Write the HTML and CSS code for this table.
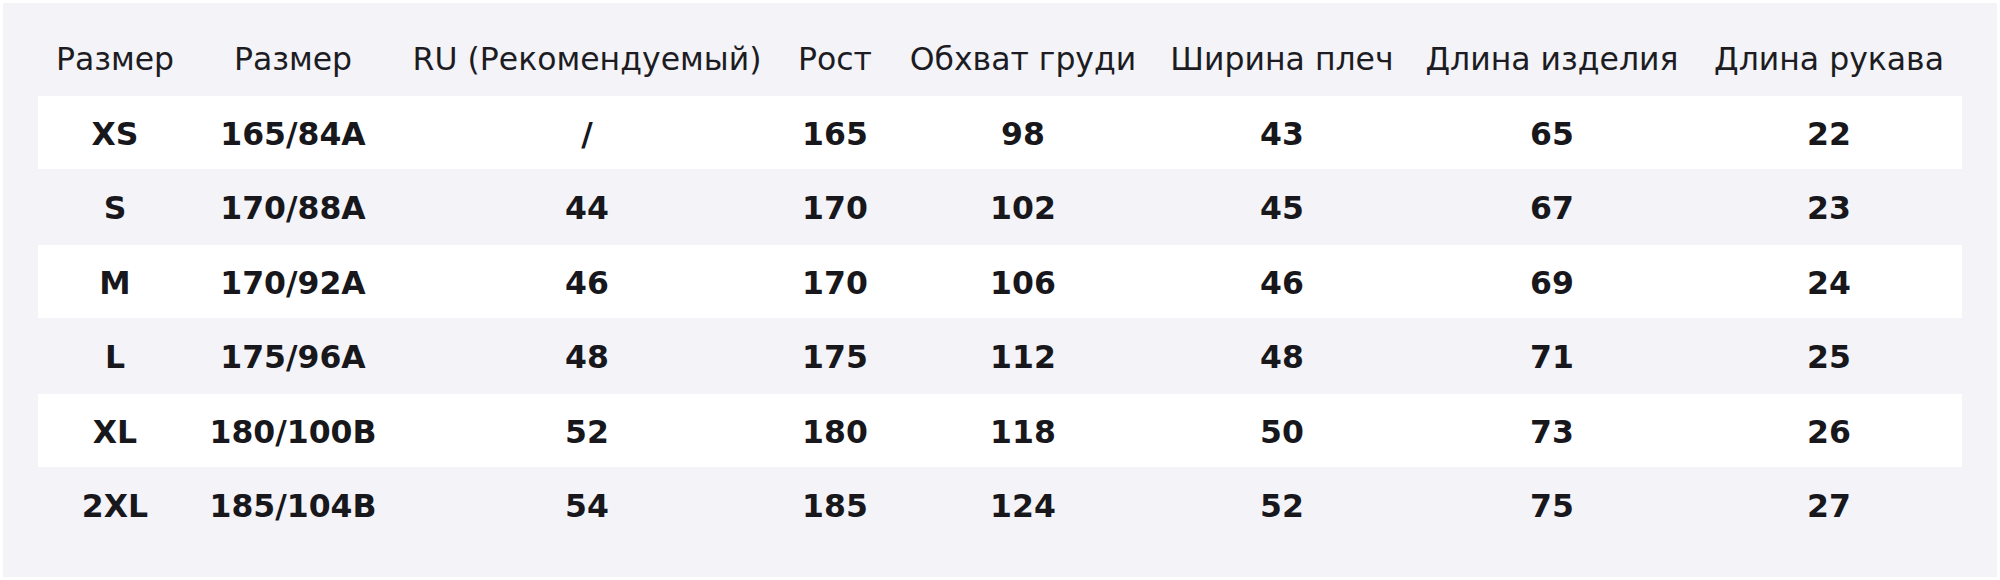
FILE: index.html
```html
<!DOCTYPE html>
<html lang="ru">
<head>
<meta charset="utf-8">
<title>Таблица размеров</title>
<link rel="stylesheet" href="styles.css">
</head>
<body>
<div class="sheet">
  <table class="sizes">
    <colgroup>
      <col class="c1"><col class="c2"><col class="c3"><col class="c4">
      <col class="c5"><col class="c6"><col class="c7"><col class="c8">
    </colgroup>
    <thead>
      <tr class="head">
        <th>Размер</th><th>Размер</th><th>RU (Рекомендуемый)</th><th>Рост</th>
        <th>Обхват груди</th><th>Ширина плеч</th><th>Длина изделия</th><th>Длина рукава</th>
      </tr>
    </thead>
    <tbody>
      <tr class="odd"><td>XS</td><td>165/84A</td><td>/</td><td>165</td><td>98</td><td>43</td><td>65</td><td>22</td></tr>
      <tr class="even"><td>S</td><td>170/88A</td><td>44</td><td>170</td><td>102</td><td>45</td><td>67</td><td>23</td></tr>
      <tr class="odd"><td>M</td><td>170/92A</td><td>46</td><td>170</td><td>106</td><td>46</td><td>69</td><td>24</td></tr>
      <tr class="even"><td>L</td><td>175/96A</td><td>48</td><td>175</td><td>112</td><td>48</td><td>71</td><td>25</td></tr>
      <tr class="odd"><td>XL</td><td>180/100B</td><td>52</td><td>180</td><td>118</td><td>50</td><td>73</td><td>26</td></tr>
      <tr class="even"><td>2XL</td><td>185/104B</td><td>54</td><td>185</td><td>124</td><td>52</td><td>75</td><td>27</td></tr>
    </tbody>
  </table>
</div>
</body>
</html>
```

FILE: styles.css
```css
html, body {
  margin: 0;
  padding: 0;
  background: #ffffff;
}

.sheet {
  margin: 3px;
  height: 574px;
  box-sizing: border-box;
  padding: 18px 35px 34px;
  background: #f3f3f8;
  font-family: "DejaVu Sans", "Liberation Sans", sans-serif;
  color: #17171c;
}

.sizes {
  width: 1924px;
  table-layout: fixed;
  border-collapse: separate;
  border-spacing: 0 2px;
}

.c1 { width: 154px; }
.c2 { width: 202px; }
.c3 { width: 386px; }
.c4 { width: 110px; }
.c5 { width: 266px; }
.c6 { width: 252px; }
.c7 { width: 288px; }
.c8 { width: 266px; }

.sizes th,
.sizes td {
  padding: 0;
  text-align: center;
  white-space: nowrap;
  font-size: 31.5px;
  line-height: 38px;
}

.head th {
  height: 71px;
  font-weight: normal;
  color: #1c1c22;
}

.sizes td {
  height: 72.5px;
  box-sizing: border-box;
  padding-top: 3px;
  font-weight: bold;
  color: #17171c;
}

.odd td { background: #ffffff; }
.even td { background: transparent; }
```
